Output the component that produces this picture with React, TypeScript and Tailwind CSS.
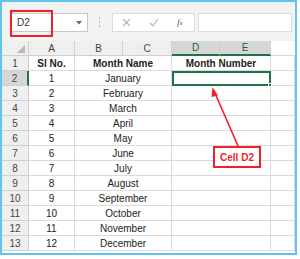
import React from "react";

const rows: [string, string][] = [
  ["1", "January"],
  ["2", "February"],
  ["3", "March"],
  ["4", "April"],
  ["5", "May"],
  ["6", "June"],
  ["7", "July"],
  ["8", "August"],
  ["9", "September"],
  ["10", "October"],
  ["11", "November"],
  ["12", "December"],
];

const cell = "h-[15px] border-r border-b border-[#dadada] flex items-center justify-center";

export default function App() {
  return (
    <div className="w-[300px] h-[259px] bg-white" style={{ fontFamily: '"Liberation Sans", Arial, sans-serif' }}>
      <div className="relative w-[297px] h-[255px] border-2 border-[#62c3ec] bg-white overflow-hidden">
        {/* formula bar */}
        <div className="h-[39px] bg-[#f3f3f3] flex items-start pt-[11px] pl-[8px]">
          <div className="relative w-[78px] h-[19px] bg-white border border-[#c8c8c8] flex items-center pl-[6px] text-[10px] text-[#333]">
            D2
            <svg className="absolute right-[5px] top-[7px]" width="6" height="4" viewBox="0 0 6 4">
              <path d="M0 0h6L3 3.5z" fill="#666" />
            </svg>
          </div>
          <div className="ml-[11px] mt-[4px] flex flex-col gap-[2px]">
            <span className="w-[1px] h-[2px] bg-[#b8b8b8]" />
            <span className="w-[1px] h-[2px] bg-[#b8b8b8]" />
            <span className="w-[1px] h-[2px] bg-[#b8b8b8]" />
          </div>
          <div className="ml-[12px] w-[83px] h-[19px] bg-white border border-[#dcdcdc] flex items-center">
            <svg className="ml-[9px]" width="9" height="9" viewBox="0 0 9 9">
              <path d="M1 1l7 7M8 1l-7 7" stroke="#b5b5b5" strokeWidth="1.1" />
            </svg>
            <svg className="ml-[18px]" width="10" height="9" viewBox="0 0 10 9">
              <path d="M1 5l3 3 5-7" stroke="#b5b5b5" strokeWidth="1.1" fill="none" />
            </svg>
            <span className="ml-[18px] text-[9px] italic text-[#555]" style={{ fontFamily: '"Liberation Serif", serif' }}>
              f<span className="text-[7px]">x</span>
            </span>
          </div>
          <div className="ml-[3px] w-[94px] h-[19px] bg-white border border-[#dcdcdc]" />
        </div>

        {/* header row */}
        <div className="grid grid-cols-[27px_46px_48px_49px_48px_51px_24px] text-[10px] text-[#444]">
          <div className="relative h-[15px] bg-[#efefef] border-r border-b border-[#cfcfcf]">
            <svg className="absolute right-[3px] bottom-[2px]" width="8" height="8" viewBox="0 0 8 8">
              <path d="M8 0V8H0z" fill="#b9b9b9" />
            </svg>
          </div>
          <div className="h-[15px] bg-[#efefef] border-r border-b border-[#cfcfcf] flex items-center justify-center">A</div>
          <div className="h-[15px] bg-[#efefef] border-r border-b border-[#cfcfcf] flex items-center justify-center">B</div>
          <div className="h-[15px] bg-[#efefef] border-r border-b border-[#cfcfcf] flex items-center justify-center">C</div>
          <div className="h-[15px] bg-[#d6d6d6] border-r border-[#cfcfcf] border-b-2 border-b-[#217346] flex items-center justify-center text-[#1f5c3a]">D</div>
          <div className="h-[15px] bg-[#d6d6d6] border-r border-[#cfcfcf] border-b-2 border-b-[#217346] flex items-center justify-center text-[#1f5c3a]">E</div>
          <div className="h-[15px] bg-white border-b border-[#dadada]" />
        </div>

        {/* row 1: titles */}
        <div className="grid grid-cols-[27px_46px_48px_49px_48px_51px_24px] text-[10px] text-[#222]">
          <div className="h-[15px] bg-[#efefef] border-r border-b border-[#cfcfcf] flex items-center justify-center text-[#444]">1</div>
          <div className={`${cell} font-bold`}>Sl No.</div>
          <div className={`${cell} col-span-2 font-bold`}>Month Name</div>
          <div className={`${cell} col-span-2 font-bold`}>Month Number</div>
          <div className={cell} />
        </div>

        {rows.map(([n, m], i) => (
          <div key={n} className="grid grid-cols-[27px_46px_48px_49px_48px_51px_24px] text-[10px] text-[#222]">
            {i === 0 ? (
              <div className="h-[15px] bg-[#d6d6d6] border-r-2 border-r-[#217346] border-b border-[#cfcfcf] flex items-center justify-center text-[#1f5c3a]">
                {i + 2}
              </div>
            ) : (
              <div className="h-[15px] bg-[#efefef] border-r border-b border-[#cfcfcf] flex items-center justify-center text-[#444]">
                {i + 2}
              </div>
            )}
            <div className={cell}>{n}</div>
            <div className={`${cell} col-span-2`}>{m}</div>
            {i === 0 ? (
              <div className="relative h-[15px] col-span-2 border-2 border-[#217346]">
                <span className="absolute -right-[3px] -bottom-[3px] w-[4px] h-[4px] bg-[#217346] border border-white" />
              </div>
            ) : (
              <div className={`${cell} col-span-2`} />
            )}
            <div className={cell} />
          </div>
        ))}

        {/* name box highlight */}
        <div className="absolute left-[8px] top-[8px] w-[43px] h-[27px] border-2 border-[#f0202a]" />

        {/* arrow */}
        <svg className="absolute left-0 top-0" width="297" height="255" viewBox="0 0 297 255">
          <line x1="236" y1="144" x2="212.5" y2="90" stroke="#f0202a" strokeWidth="1.6" />
          <path d="M210.5 85l5.5 8.5-6.5 1.6z" fill="#f0202a" />
        </svg>

        <div className="absolute left-[211px] top-[144px] w-[48px] h-[22px] bg-white border-2 border-[#f0202a] flex items-center justify-center text-[10px] font-bold text-[#f0202a]">
          Cell D2
        </div>
      </div>
    </div>
  );
}
